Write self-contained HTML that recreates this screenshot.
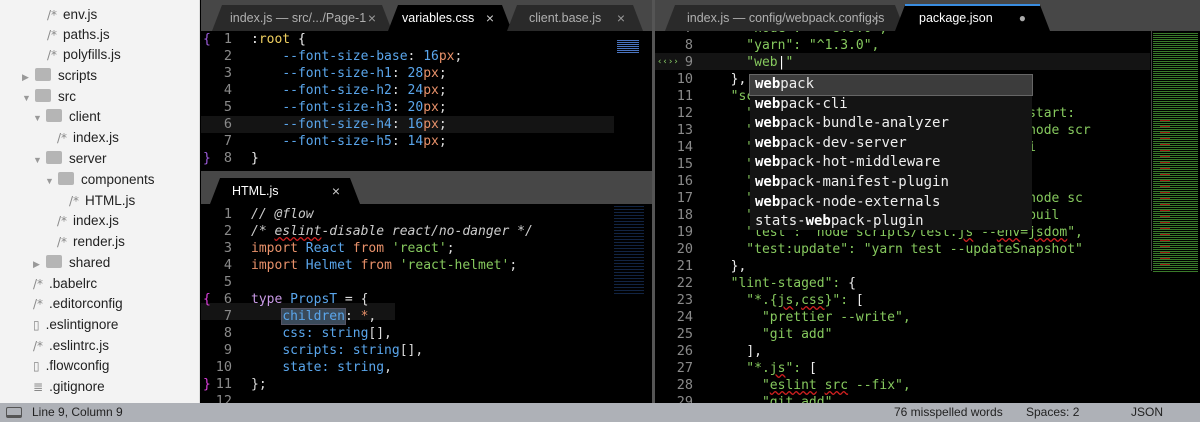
<!DOCTYPE html>
<html><head><meta charset="utf-8"><style>
*{margin:0;padding:0;box-sizing:border-box}
body{width:1200px;height:422px;overflow:hidden;background:#000;position:relative;font-family:"Liberation Sans",sans-serif}
.sb{position:absolute;left:0;top:0;width:200px;height:403px;background:#f3f3f3;border-right:1px solid #ddd}
.it{position:absolute;font-size:13.5px;color:#222;white-space:nowrap;line-height:20px}
.ic{color:#888;font-size:12px;margin-right:6px;font-family:"DejaVu Sans",sans-serif}
.fd{display:inline-block;width:16px;height:13px;background:#b5b5b5;border-radius:2px;vertical-align:-1px;margin-right:7px}
.ar{color:#999;font-size:9px;margin-right:5px;display:inline-block;width:8px}
.bar{position:absolute;background:#474747}
.tab{position:absolute;height:26px;top:5px;background:#2a2a2a;color:#b0b0b0;font-size:12.5px;line-height:26px;clip-path:polygon(10px 0,calc(100% - 10px) 0,100% 100%,0 100%);padding-left:22px;white-space:nowrap}
.tab.a{background:#000;color:#fff}
.tab .x{position:absolute;right:20px;top:0;color:#999;font-size:14px}
.code{position:absolute;font-family:"DejaVu Sans Mono",monospace;font-size:13px;line-height:17px;white-space:pre;color:#ddd}
.ln{position:absolute;font-family:"DejaVu Sans Mono",monospace;font-size:13.5px;line-height:17px;color:#8a8a8a;text-align:right;white-space:pre}
.b{color:#5aa6ec}.o{color:#e8916a}.g{color:#86c95e}.p{color:#c99ae6}.w{color:#eee}.c{color:#ccc;font-style:italic}
.st{position:absolute;left:0;top:403px;width:1200px;height:19px;background:#aeb1b7;font-size:12px;color:#222;line-height:19px}
.ac{position:absolute;left:750px;top:75px;width:282px;height:155px;background:#141414;font-family:"DejaVu Sans Mono",monospace;font-size:14px;color:#eee}
.ac div{height:19.6px;line-height:19.6px;padding-left:5px}
.ac b{font-weight:bold;color:#fff}
</style></head><body>
<div class="sb">
<div class="it" style="left:47px;top:5px"><span class="ic">/*</span>env.js</div>
<div class="it" style="left:47px;top:25px"><span class="ic">/*</span>paths.js</div>
<div class="it" style="left:47px;top:45px"><span class="ic">/*</span>polyfills.js</div>
<div class="it" style="left:22px;top:66px"><span class="ar">▶</span><span class="fd"></span>scripts</div>
<div class="it" style="left:22px;top:87px"><span class="ar">▼</span><span class="fd"></span>src</div>
<div class="it" style="left:33px;top:107px"><span class="ar">▼</span><span class="fd"></span>client</div>
<div class="it" style="left:57px;top:128px"><span class="ic">/*</span>index.js</div>
<div class="it" style="left:33px;top:149px"><span class="ar">▼</span><span class="fd"></span>server</div>
<div class="it" style="left:45px;top:170px"><span class="ar">▼</span><span class="fd"></span>components</div>
<div class="it" style="left:69px;top:191px"><span class="ic">/*</span>HTML.js</div>
<div class="it" style="left:57px;top:211px"><span class="ic">/*</span>index.js</div>
<div class="it" style="left:57px;top:232px"><span class="ic">/*</span>render.js</div>
<div class="it" style="left:33px;top:253px"><span class="ar">▶</span><span class="fd"></span>shared</div>
<div class="it" style="left:33px;top:274px"><span class="ic">/*</span>.babelrc</div>
<div class="it" style="left:33px;top:294px"><span class="ic">/*</span>.editorconfig</div>
<div class="it" style="left:33px;top:315px"><span class="ic">▯</span>.eslintignore</div>
<div class="it" style="left:33px;top:336px"><span class="ic">/*</span>.eslintrc.js</div>
<div class="it" style="left:33px;top:356px"><span class="ic">▯</span>.flowconfig</div>
<div class="it" style="left:33px;top:377px"><span class="ic">≣</span>.gitignore</div>
</div>

<div class="bar" style="left:201px;top:0;width:452px;height:31px"></div>
<div class="tab" style="left:212px;width:180px;padding-left:18px">index.js — src/.../Page-1<span class="x" style="right:16px">×</span></div>
<div class="tab a" style="left:388px;width:124px;padding-left:14px">variables.css<span class="x" style="right:18px;color:#ccc">×</span></div>
<div class="tab" style="left:507px;width:136px">client.base.js<span class="x" style="right:18px">×</span></div>

<div style="position:absolute;left:201px;top:116px;width:413px;height:17px;background:#141414"></div>
<div class="ln" style="left:200px;top:31px;width:32px">1
2
3
4
5
6
7
8</div>
<div class="code" style="left:203px;top:31px"><span style="color:#a05ee0">{</span>






<span style="color:#a05ee0">}</span></div>
<div class="code" style="left:251px;top:31px"><span class="w">:</span><span style="color:#f0d060">root</span> <span class="w">{</span>
    <span class="b">--font-size-base</span>: <span class="b">16</span><span class="o">px</span>;
    <span class="b">--font-size-h1</span>: <span class="b">28</span><span class="o">px</span>;
    <span class="b">--font-size-h2</span>: <span class="b">24</span><span class="o">px</span>;
    <span class="b">--font-size-h3</span>: <span class="b">20</span><span class="o">px</span>;
    <span class="b">--font-size-h4</span>: <span class="b">16</span><span class="o">px</span>;
    <span class="b">--font-size-h5</span>: <span class="b">14</span><span class="o">px</span>;
<span class="w">}</span></div>
<div style="position:absolute;left:617px;top:40px;width:22px;height:14px;background:repeating-linear-gradient(#4a74c0 0 1px,#000 1px 2px)"></div>

<div class="bar" style="left:201px;top:171px;width:452px;height:33px"></div>
<div class="tab a" style="left:210px;top:178px;width:150px">HTML.js<span class="x" style="color:#ccc">×</span></div>
<div style="position:absolute;left:201px;top:303px;width:194px;height:17px;background:#141414"></div>
<div class="ln" style="left:200px;top:206px;width:32px">1
2
3
4
5
6
7
8
9
10
11
12</div>
<div class="code" style="left:203px;top:206px;color:#e040e0">




{




}</div>
<div class="code" style="left:251px;top:206px"><span class="c">// @flow</span>
<span class="c">/* <span style="text-decoration:underline wavy #d02020">eslint</span>-disable react/no-danger */</span>
<span class="o">import</span> <span class="b">React</span> <span class="o">from</span> <span class="g">'react'</span>;
<span class="o">import</span> <span class="b">Helmet</span> <span class="o">from</span> <span class="g">'react-helmet'</span>;

<span class="p">type</span> <span class="b">PropsT</span> = {
    <span class="b" style="background:#3a4a5a;outline:1px solid #556">children</span>: <span class="o">*</span>,
    <span class="b">css: string</span>[],
    <span class="b">scripts: string</span>[],
    <span class="b">state: string</span>,
};</div>
<div style="position:absolute;left:614px;top:206px;width:30px;height:90px;background:repeating-linear-gradient(#1d3c70 0 1px,#000 1px 3px);opacity:.6"></div>

<div style="position:absolute;left:652px;top:0;width:3px;height:403px;background:#555"></div>

<div class="bar" style="left:655px;top:0;width:545px;height:31px"></div>
<div class="tab" style="left:665px;width:240px;padding-left:22px">index.js — config/webpack.config.js<span class="x" style="right:26px">×</span></div>
<div class="tab a" style="left:895px;width:155px;padding-left:24px">package.json<span class="x" style="color:#aaa;font-size:12px;right:24px">●</span></div>
<div style="position:absolute;left:905px;top:4px;width:135px;height:2px;background:#3a8de0"></div>

<div style="position:absolute;left:655px;top:53px;width:495px;height:17px;background:#141414"></div>
<div style="position:absolute;left:655px;top:31px;width:495px;height:372px;overflow:hidden">
<div class="ln" style="left:0;top:-11px;width:38px">7
8
9
10
11
12
13
14
15
16
17
18
19
20
21
22
23
24
25
26
27
28
29</div>
<div class="code" style="left:2px;top:-11px;font-size:9px;color:#8c6"> 

‹‹›› </div>
<div class="code g" style="left:60px;top:-11px">    "node": "&gt;=8.9.0",
    "yarn": "^1.3.0",
    "web<span style="color:#fff">|</span>"
  <span class="w">},</span>
  "scripts": {
    "start": "yarn build:client && yarn start:
    "start:prod": "cross-env production node scr
    "build": "cross-env NODE_ENV=producti
    "build:client": "
    "dev": "
    "start:dev": "cross-env development node sc
    "analyze": "webpack-bundle-analyzer buil
    "test": "node scripts/test.<span style="text-decoration:underline wavy #d02020">js</span> --<span style="text-decoration:underline wavy #d02020">env</span>=<span style="text-decoration:underline wavy #d02020">jsdom</span>",
    "test:update": "yarn test --updateSnapshot"
  <span class="w">},</span>
  "lint-staged": <span class="w">{</span>
    "*.{<span style="text-decoration:underline wavy #d02020">js</span>,<span style="text-decoration:underline wavy #d02020">css</span>}": <span class="w">[</span>
      "prettier --write",
      "git add"
    <span class="w">],</span>
    "*.<span style="text-decoration:underline wavy #d02020">js</span>": <span class="w">[</span>
      "<span style="text-decoration:underline wavy #d02020">eslint</span> <span style="text-decoration:underline wavy #d02020">src</span> --fix",
      "git add"</div>
</div>
<div class="ac">
<div style="background:#3c3c3c;outline:1px solid #666"><b>web</b>pack</div>
<div><b>web</b>pack-cli</div>
<div><b>web</b>pack-bundle-analyzer</div>
<div><b>web</b>pack-dev-server</div>
<div><b>web</b>pack-hot-middleware</div>
<div><b>web</b>pack-manifest-plugin</div>
<div><b>web</b>pack-node-externals</div>
<div>stats-<b>web</b>pack-plugin</div>
</div>
<div style="position:absolute;left:1151px;top:31px;width:1px;height:240px;background:#444"></div>
<div style="position:absolute;left:1153px;top:33px;width:45px;height:240px;background:repeating-linear-gradient(#3a7a2a 0 1px,#000 1px 2px)"></div>
<div style="position:absolute;left:1160px;top:120px;width:10px;height:150px;background:repeating-linear-gradient(#9a1010 0 1px,transparent 1px 6px)"></div>

<div class="st">
<span style="position:absolute;left:6px;top:4px;width:16px;height:11px;border:1.5px solid #555;border-radius:2px;border-bottom-width:3px"></span>
<span style="position:absolute;left:32px">Line 9, Column 9</span>
<span style="position:absolute;left:894px">76 misspelled words</span>
<span style="position:absolute;left:1026px">Spaces: 2</span>
<span style="position:absolute;left:1131px">JSON</span>
</div>
</body></html>
